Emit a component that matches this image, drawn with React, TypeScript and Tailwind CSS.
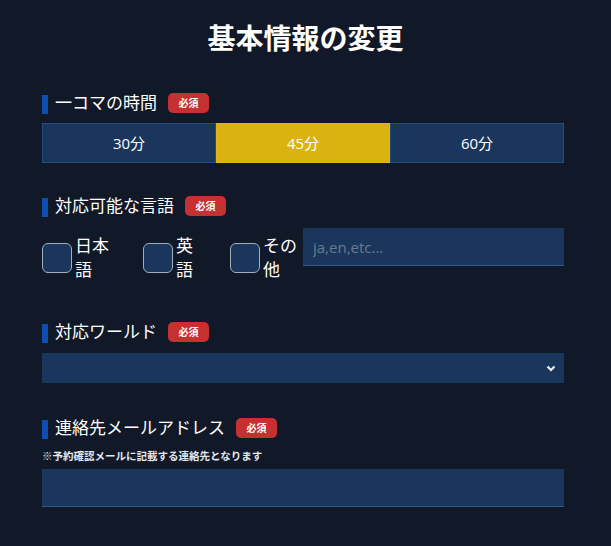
import { useState } from "react";

const FONT = { fontFamily: '"Open Sans", "Noto Sans CJK JP", sans-serif' };

function SectionHeader({ label }: { label: string }) {
  return (
    <div className="flex h-[20px] items-center">
      <span className="mt-[3px] h-[19px] w-[6px] bg-[#0c4fae]" />
      <span className="ml-[7px] text-[17px] leading-[20px] text-white">{label}</span>
      <span className="ml-[11px] flex h-[20px] w-[41px] items-center justify-center rounded-[5px] bg-[#c53030] text-[10px] font-bold text-white">
        必須
      </span>
    </div>
  );
}

function LangCheck({ label, width, labelWidth }: { label: string; width: string; labelWidth: string }) {
  return (
    <label className={`flex shrink-0 items-center ${width}`}>
      <span className="h-[30px] w-[30px] shrink-0 rounded-[6px] border-[1.5px] border-[#a0aec0] bg-[#1a365d]" />
      <span className={`ml-[3px] text-[17px] leading-[24px] text-white ${labelWidth}`}>{label}</span>
    </label>
  );
}

export default function App() {
  const [duration, setDuration] = useState("45");
  const durations = ["30", "45", "60"];

  return (
    <div className="min-h-[546px] w-full bg-[#111827] pb-[39px]" style={FONT}>
      <h1 className="pt-[18px] text-center text-[28px] font-bold leading-[40px] text-white">基本情報の変更</h1>

      <div className="ml-[42px] w-[522px]">
        <section className="mt-[35px]">
          <SectionHeader label="一コマの時間" />
          <div className="mt-[10px] grid grid-cols-3">
            {durations.map((d) => (
              <button
                key={d}
                onClick={() => setDuration(d)}
                className={
                  duration === d
                    ? "h-[40px] border border-[#e0b514] bg-[#dab311] text-[15px] text-white"
                    : "h-[40px] border border-[#234c80] bg-[#1a365d] text-[15px] text-white"
                }
              >
                {d}分
              </button>
            ))}
          </div>
        </section>

        <section className="mt-[33px]">
          <SectionHeader label="対応可能な言語" />
          <div className="mt-[12px] flex items-start">
            <div className="mt-[6px] flex">
              <LangCheck label="日本語" width="w-[101px]" labelWidth="w-[36px]" />
              <LangCheck label="英語" width="w-[87px]" labelWidth="w-[20px]" />
              <LangCheck label="その他" width="w-[73px]" labelWidth="w-[36px]" />
            </div>
            <input
              placeholder="ja,en,etc..."
              className="h-[38px] w-[261px] border-b border-[#2a5a8f] bg-[#1a365d] px-[10px] text-[15px] text-white outline-none placeholder:text-[#6b7a8f]"
            />
          </div>
        </section>

        <section className="mt-[40px]">
          <SectionHeader label="対応ワールド" />
          <div className="relative mt-[11px] h-[30px] bg-[#1a365d]">
            <svg
              className="absolute right-[8px] top-[12px]"
              width="10"
              height="7"
              viewBox="0 0 10 7"
              fill="none"
              stroke="white"
              strokeWidth="2"
            >
              <path d="M1.5 1.5 L5 5 L8.5 1.5" />
            </svg>
          </div>
        </section>

        <section className="mt-[35px]">
          <SectionHeader label="連絡先メールアドレス" />
          <p className="mt-[11px] text-[10.5px] font-bold leading-[14px] text-[#e2e8f0]">
            ※予約確認メールに記載する連絡先となります
          </p>
          <input className="mt-[6px] block h-[38px] w-full border-b border-[#2a5a8f] bg-[#1a365d] px-[10px] text-[15px] text-white outline-none" />
        </section>
      </div>
    </div>
  );
}
